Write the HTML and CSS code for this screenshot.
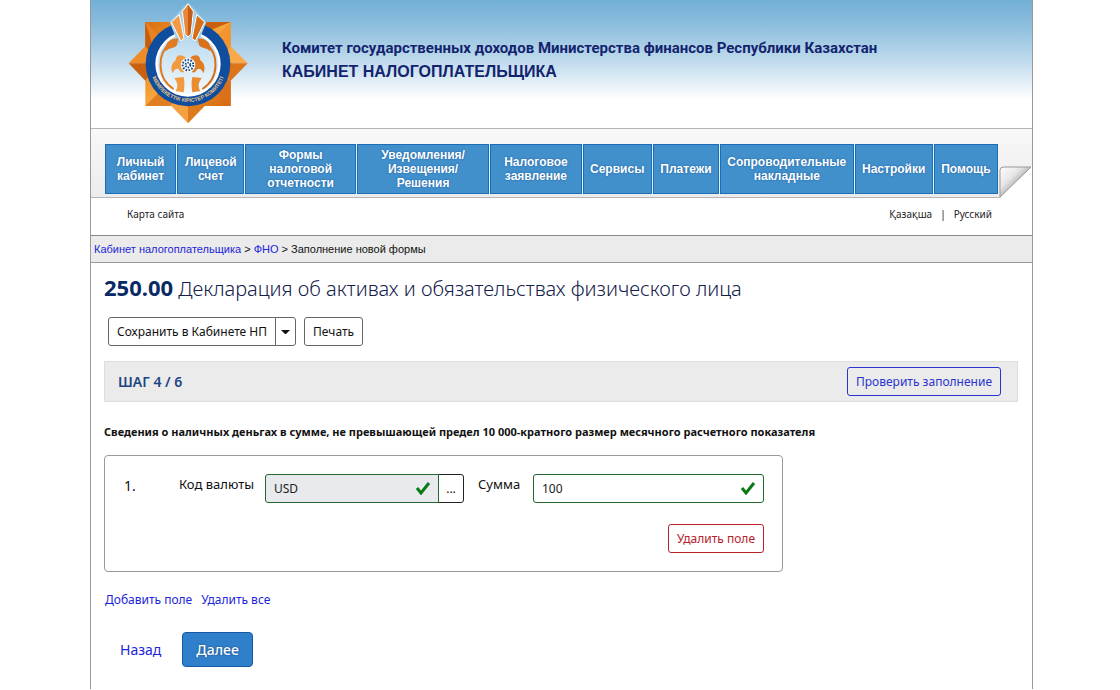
FILE: index.html
```html
<!DOCTYPE html>
<html lang="ru">

<head>
  <meta charset="utf-8">
  <title>Кабинет налогоплательщика</title>
  <link rel="stylesheet" href="styles.css">
</head>

<body>
<div class="page">

  <header class="header">
    <svg class="emblem" viewBox="110 10 366 366" role="img" aria-label="Комитет государственных доходов">
      <defs>
        <linearGradient id="gold" x1="0" y1="0" x2="1" y2="1">
          <stop offset="0" stop-color="#d9700f"/>
          <stop offset="0.5" stop-color="#f9a53c"/>
          <stop offset="1" stop-color="#d4660c"/>
        </linearGradient>
        <linearGradient id="disc" x1="0" y1="0" x2="0" y2="1">
          <stop offset="0" stop-color="#b5d8ee"/>
          <stop offset="1" stop-color="#f4f9fc"/>
        </linearGradient>
        <path id="motto" d="M179 193 A114 114 0 0 0 407 193"/>
      </defs>
      <!-- star -->
      <path fill="url(#gold)" d="M165 67H421V319H165Z"/>
      <path fill="#e8831f" d="M165 67L293 193H165Z"/>
      <path fill="#c65c0c" d="M165 67L200 180L165 140Z"/>
      <path fill="#f2952f" d="M421 67L293 193H421Z"/>
      <path fill="#c9600f" d="M421 67L325 105L340 67Z"/>
      <path fill="#d9701a" d="M421 319L293 193L421 245Z"/>
      <path fill="#e07e22" d="M165 319L293 193L240 319Z"/>
      <path fill="#f08b25" d="M115 191L165 140L200 191Z"/>
      <path fill="#c86210" d="M115 191L165 243L200 191Z"/>
      <path fill="#f9a84a" d="M472 191L421 140L390 191Z"/>
      <path fill="#dc741a" d="M472 191L421 243L390 191Z"/>
      <path fill="#f6a044" d="M293 371L240 316L293 290Z"/>
      <path fill="#dd7a1c" d="M293 371L346 316L293 290Z"/>
      <!-- ring -->
      <circle cx="293" cy="193" r="127" fill="#0f4d9f"/>
      <circle cx="293" cy="193" r="98" fill="#fff"/>
      <circle cx="293" cy="193" r="91" fill="url(#disc)"/>
      <path fill="#a4cfe9" d="M238 68L293 8L348 68L322 132L293 108L264 132Z"/>
      <!-- crown rays -->
      <path fill="#e8883a" stroke="#fff" stroke-width="3" d="M293 13L309 35L302 104L293 112L284 104L276 35Z"/>
      <path fill="#c65c14" d="M293 15L307 36L300 103L293 109Z"/>
      <path fill="#f39a45" stroke="#fff" stroke-width="3" d="M243 67L267 45L281 116L271 124Z"/>
      <path fill="#d7701b" stroke="#fff" stroke-width="3" d="M343 67L319 45L305 116L315 124Z"/>
      <!-- side horns -->
      <g fill="none" stroke="#e07b22" stroke-width="6">
        <path d="M240 132C200 160 198 235 250 268"/>
        <path fill="#e07b22" stroke="none" d="M264 117C237 113 222 135 226 155C238 142 253 147 260 136Z"/>
        <path fill="#f19a40" stroke="none" d="M252 235L280 232C284 250 282 265 280 278L256 274C264 262 262 248 252 235Z"/>
      </g>
      <g fill="none" stroke="#d9711b" stroke-width="6">
        <path d="M346 132C386 160 388 235 336 268"/>
        <path fill="#d9711b" stroke="none" d="M322 117C349 113 364 135 360 155C348 142 333 147 326 136Z"/>
        <path fill="#e98b31" stroke="none" d="M334 235L306 232C302 250 304 265 306 278L330 274C322 262 324 248 334 235Z"/>
      </g>
      <!-- wings -->
      <path fill="#f19a40" d="M288 176C275 162 257 164 256 182C243 190 240 207 247 221C252 206 264 204 268 212C273 222 280 220 284 211Z"/>
      <path fill="#e07b22" d="M298 176C311 162 329 164 330 182C343 190 346 207 339 221C334 206 322 204 318 212C313 222 306 220 302 211Z"/>
      <circle cx="293" cy="196" r="22" fill="#fff"/>
      <circle cx="293" cy="196" r="16" fill="none" stroke="#174f91" stroke-width="6" stroke-dasharray="5 4"/>
      <circle cx="293" cy="196" r="7" fill="none" stroke="#174f91" stroke-width="6" stroke-dasharray="4 3"/>
      <text class="motto"><textPath href="#motto" startOffset="50%" text-anchor="middle">МЕМЛЕКЕТТІК КІРІСТЕР КОМИТЕТІ</textPath></text>
    </svg>
    <div class="header-text">
      <p class="committee">Комитет государственных доходов Министерства финансов Республики Казахстан</p>
      <p class="cabinet">КАБИНЕТ НАЛОГОПЛАТЕЛЬЩИКА</p>
    </div>
  </header>

  <nav class="nav">
    <div class="menu">
      <a href="#">Личный кабинет</a>
      <a href="#">Лицевой счет</a>
      <a href="#">Формы налоговой отчетности</a>
      <a href="#">Уведомления/<br>Извещения/<br>Решения</a>
      <a href="#">Налоговое заявление</a>
      <a href="#">Сервисы</a>
      <a href="#">Платежи</a>
      <a href="#">Сопроводительные накладные</a>
      <a href="#">Настройки</a>
      <a href="#">Помощь</a>
    </div>
    <svg class="curl" viewBox="0 0 33 32">
      <defs>
        <linearGradient id="fold" x1="0" y1="0" x2="1" y2="1">
          <stop offset="0" stop-color="#fff"/>
          <stop offset="0.35" stop-color="#e6e6e6"/>
          <stop offset="0.55" stop-color="#b5b5b5"/>
        </linearGradient>
      </defs>
      <path fill="#fff" d="M33 0V32H1Z"/>
      <path fill="url(#fold)" stroke="#999" d="M1 31V4Q1 1 5 1H32Z"/>
    </svg>
  </nav>

  <div class="site-row">
    <a href="#">Карта сайта</a>
    <div class="langs"><a href="#">Қазақша</a><span>|</span><a href="#">Русский</a></div>
  </div>

  <div class="crumbs">
    <a href="#">Кабинет налогоплательщика</a> &gt; <a href="#">ФНО</a> &gt; Заполнение новой формы
  </div>

  <main class="content">
    <h1 class="title"><b>250.00</b> Декларация об активах и обязательствах физического лица</h1>

    <div class="toolbar">
      <div class="split">
        <button class="btn">Сохранить в Кабинете НП</button>
        <button class="btn arrow" aria-label="Ещё"><span class="caret"></span></button>
      </div>
      <button class="btn">Печать</button>
    </div>

    <div class="step">
      <span class="step-name">ШАГ 4 / 6</span>
      <button class="btn btn-blue">Проверить заполнение</button>
    </div>

    <h2 class="section-title">Сведения о наличных деньгах в сумме, не превышающей предел 10 000-кратного размер месячного расчетного показателя</h2>

    <div class="card">
      <div class="row">
        <span class="num">1.</span>
        <label class="label-code" for="code">Код валюты</label>
        <div class="split code">
          <div class="field">
            <input id="code" class="input readonly" type="text" value="USD" readonly>
            <svg class="check" viewBox="0 0 16 14"><path d="M2 7L6 12L14 2"/></svg>
          </div>
          <button class="btn dots">...</button>
        </div>
        <label class="label-sum" for="sum">Сумма</label>
        <div class="field sum">
          <input id="sum" class="input" type="text" value="100">
          <svg class="check" viewBox="0 0 16 14"><path d="M2 7L6 12L14 2"/></svg>
        </div>
      </div>
      <div class="card-actions">
        <button class="btn btn-red">Удалить поле</button>
      </div>
    </div>

    <div class="links">
      <a href="#">Добавить поле</a>
      <a href="#">Удалить все</a>
    </div>

    <div class="steps-nav">
      <a href="#">Назад</a>
      <button class="next">Далее</button>
    </div>
  </main>
</div>
</body>

</html>
```
FILE: styles.css
```css
* {
    box-sizing: border-box;
}

body {
    margin: 0;
    background-color: white;
    color: #111;
    font-family: "Noto Sans", sans-serif;
    font-size: 13px;
}

a {
    color: #1c26d8;
    text-decoration: none;
}

.page {
    margin: 0 87px 2px 90px;
    border: solid #999;
    border-width: 0 1px;
}

/* header */
.header {
    display: flex;
    align-items: flex-start;
    gap: 33px;
    height: 128px;
    padding: 3px 36px;
    background: linear-gradient(#71afd6, #8dbedd 20%, #c4ddee 50%, #fff 78%);
}

.emblem {
    width: 122px;
    height: 122px;
    flex: none;
}

.motto {
    font-family: "Liberation Sans", sans-serif;
    font-size: 16px;
    font-weight: bold;
    fill: #e8c48a;
}

.header-text {
    padding-top: 34px;
    color: #13246f;
    font-family: "Liberation Sans", sans-serif;
    font-weight: bold;
}

.header-text p {
    margin: 0;
    line-height: 23px;
}

.committee {
    font-family: Roboto, sans-serif;
    font-size: 15px;
}

.cabinet {
    font-size: 16px;
}

/* main menu */
.nav {
    position: relative;
    padding: 15px 34px 3px 14px;
    border: solid #b5b5b5;
    border-width: 1px 0;
    background: linear-gradient(#f8f8f8, #ececec);
}

.menu {
    display: grid;
    grid-template-columns: 71fr 67fr 110fr 132fr 91fr 69fr 66fr 133fr 78fr 64fr;
    gap: 1px;
    background-color: #e2f3fc;
}

.menu a {
    display: flex;
    align-items: center;
    justify-content: center;
    height: 50px;
    padding: 0 5px;
    border: 1px solid #1b6db8;
    background-color: #4190cc;
    color: white;
    font-family: "Liberation Sans", sans-serif;
    font-size: 12px;
    font-weight: bold;
    line-height: 14px;
    text-align: center;
    text-shadow: 0 0 2px #1b5797;
}

.curl {
    position: absolute;
    right: 0;
    bottom: -1px;
    width: 33px;
    height: 32px;
}

.site-row {
    display: flex;
    justify-content: space-between;
    padding: 0 40px 4px 36px;
    line-height: 33px;
    font-size: 10px;
    border-bottom: 1px solid #888;
}

.site-row a {
    color: #222;
}

.langs {
    display: flex;
    gap: 8px;
}

.crumbs {
    padding-left: 3px;
    line-height: 26px;
    font-family: "Liberation Sans", sans-serif;
    font-size: 11px;
    background-color: #ebebeb;
    border-bottom: 1px solid #999;
}

/* form */
.content {
    padding: 8px 14px 22px 13px;
}

.title {
    margin: 0;
    font-family: "Noto Sans", sans-serif;
    font-size: 20px;
    font-weight: 300;
    line-height: 32px;
    color: #12204a;
}

.title b {
    font-size: 22px;
    font-weight: 700;
    color: #0a2a66;
}

.toolbar {
    display: flex;
    gap: 8px;
    margin: 12px 4px 15px;
}

.split {
    display: flex;
}

.btn {
    height: 29px;
    padding: 0 8px;
    border: 1px solid #666;
    border-radius: 3px;
    background-color: white;
    color: #111;
    font-family: "Noto Sans", sans-serif;
    font-size: 12px;
    white-space: nowrap;
}

.split .btn:first-child {
    border-radius: 3px 0 0 3px;
}

.split .btn:last-child {
    margin-left: -1px;
    border-radius: 0 3px 3px 0;
}

.arrow {
    width: 21px;
    padding: 0 5px;
}

.caret {
    display: block;
    border: solid transparent;
    border-width: 4px 4px 0;
    border-top-color: #111;
}

.step {
    display: flex;
    justify-content: space-between;
    align-items: center;
    height: 41px;
    padding: 0 16px 0 13px;
    border: 1px solid #ddd;
    background-color: #ebebeb;
}

.step-name {
    color: #1d4484;
    font-size: 14px;
    font-weight: 600;
}

.btn-blue {
    border-color: #2a33d0;
    background-color: transparent;
    color: #2a33d0;
}

.section-title {
    margin: 21px 0 14px;
    font-size: 11px;
    font-weight: bold;
    line-height: 18px;
}

.card {
    max-width: 679px;
    padding: 18px 18px 18px 19px;
    border: 1px solid #999;
    border-radius: 4px;
}

.row {
    display: flex;
    align-items: flex-start;
    line-height: 20px;
}

.num {
    width: 55px;
    font-size: 14px;
    line-height: 24px;
}

.label-code {
    width: 86px;
}

.code {
    width: 199px;
    margin-right: 14px;
}

.label-sum {
    width: 55px;
}

.field {
    position: relative;
    flex: 1;
}

.input {
    width: 100%;
    height: 29px;
    padding: 0 8px;
    border: 1px solid #23682f;
    border-radius: 3px;
    background-color: white;
    color: #222;
    font-family: "Noto Sans", sans-serif;
    font-size: 12px;
}

.readonly {
    border-radius: 3px 0 0 3px;
    background-color: #e8eaed;
}

.check {
    position: absolute;
    top: 7px;
    right: 8px;
    width: 16px;
    height: 14px;
    fill: none;
    stroke: #0b7a16;
    stroke-width: 3;
}

.split .dots {
    width: 26px;
    padding: 0;
    border-color: #222;
}

.card-actions {
    display: flex;
    justify-content: flex-end;
    margin-top: 21px;
}

.btn-red {
    border-color: #b8202c;
    color: #b8202c;
}

.links {
    display: flex;
    gap: 9px;
    margin-top: 17px;
    padding-left: 1px;
    font-size: 12px;
    line-height: 22px;
}

.steps-nav {
    display: flex;
    align-items: center;
    gap: 21px;
    margin: 21px 16px 0;
    font-size: 14px;
}

.next {
    height: 35px;
    padding: 0 13px;
    border: 1px solid #1559a5;
    border-radius: 4px;
    background-color: #2f7fca;
    color: white;
    font-family: "Noto Sans", sans-serif;
    font-size: 14px;
    font-weight: 500;
    text-shadow: 0 0 2px #123f75;
}
```
